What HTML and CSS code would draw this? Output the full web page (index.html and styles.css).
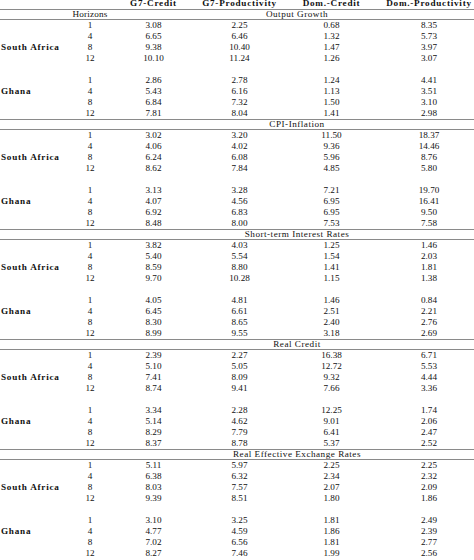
FILE: index.html
```html
<!DOCTYPE html>
<html>
<head>
<meta charset="utf-8">
<link rel="stylesheet" href="styles.css">
</head>
<body>
<div class="table">
  <div class="row head"><span></span><span></span><span>G7-Credit</span><span>G7-Productivity</span><span>Dom.-Credit</span><span>Dom.-Productivity</span></div>

  <div class="row title"><span></span><span class="lbl">Horizons</span><span class="span">Output Growth</span></div>
  <div class="row"><span></span><span>1</span><span>3.08</span><span>2.25</span><span>0.68</span><span>8.35</span></div>
  <div class="row"><span></span><span>4</span><span>6.65</span><span>6.46</span><span>1.32</span><span>5.73</span></div>
  <div class="row"><span class="country">South Africa</span><span>8</span><span>9.38</span><span>10.40</span><span>1.47</span><span>3.97</span></div>
  <div class="row"><span></span><span>12</span><span>10.10</span><span>11.24</span><span>1.26</span><span>3.07</span></div>
  <div class="row blank"></div>
  <div class="row"><span></span><span>1</span><span>2.86</span><span>2.78</span><span>1.24</span><span>4.41</span></div>
  <div class="row"><span class="country">Ghana</span><span>4</span><span>5.43</span><span>6.16</span><span>1.13</span><span>3.51</span></div>
  <div class="row"><span></span><span>8</span><span>6.84</span><span>7.32</span><span>1.50</span><span>3.10</span></div>
  <div class="row"><span></span><span>12</span><span>7.81</span><span>8.04</span><span>1.41</span><span>2.98</span></div>

  <div class="row title"><span></span><span></span><span class="span">CPI-Inflation</span></div>
  <div class="row"><span></span><span>1</span><span>3.02</span><span>3.20</span><span>11.50</span><span>18.37</span></div>
  <div class="row"><span></span><span>4</span><span>4.06</span><span>4.02</span><span>9.36</span><span>14.46</span></div>
  <div class="row"><span class="country">South Africa</span><span>8</span><span>6.24</span><span>6.08</span><span>5.96</span><span>8.76</span></div>
  <div class="row"><span></span><span>12</span><span>8.62</span><span>7.84</span><span>4.85</span><span>5.80</span></div>
  <div class="row blank"></div>
  <div class="row"><span></span><span>1</span><span>3.13</span><span>3.28</span><span>7.21</span><span>19.70</span></div>
  <div class="row"><span class="country">Ghana</span><span>4</span><span>4.07</span><span>4.56</span><span>6.95</span><span>16.41</span></div>
  <div class="row"><span></span><span>8</span><span>6.92</span><span>6.83</span><span>6.95</span><span>9.50</span></div>
  <div class="row"><span></span><span>12</span><span>8.48</span><span>8.00</span><span>7.53</span><span>7.58</span></div>

  <div class="row title"><span></span><span></span><span class="span">Short-term Interest Rates</span></div>
  <div class="row"><span></span><span>1</span><span>3.82</span><span>4.03</span><span>1.25</span><span>1.46</span></div>
  <div class="row"><span></span><span>4</span><span>5.40</span><span>5.54</span><span>1.54</span><span>2.03</span></div>
  <div class="row"><span class="country">South Africa</span><span>8</span><span>8.59</span><span>8.80</span><span>1.41</span><span>1.81</span></div>
  <div class="row"><span></span><span>12</span><span>9.70</span><span>10.28</span><span>1.15</span><span>1.38</span></div>
  <div class="row blank"></div>
  <div class="row"><span></span><span>1</span><span>4.05</span><span>4.81</span><span>1.46</span><span>0.84</span></div>
  <div class="row"><span class="country">Ghana</span><span>4</span><span>6.45</span><span>6.61</span><span>2.51</span><span>2.21</span></div>
  <div class="row"><span></span><span>8</span><span>8.30</span><span>8.65</span><span>2.40</span><span>2.76</span></div>
  <div class="row"><span></span><span>12</span><span>8.99</span><span>9.55</span><span>3.18</span><span>2.69</span></div>

  <div class="row title"><span></span><span></span><span class="span">Real Credit</span></div>
  <div class="row"><span></span><span>1</span><span>2.39</span><span>2.27</span><span>16.38</span><span>6.71</span></div>
  <div class="row"><span></span><span>4</span><span>5.10</span><span>5.05</span><span>12.72</span><span>5.53</span></div>
  <div class="row"><span class="country">South Africa</span><span>8</span><span>7.41</span><span>8.09</span><span>9.32</span><span>4.44</span></div>
  <div class="row"><span></span><span>12</span><span>8.74</span><span>9.41</span><span>7.66</span><span>3.36</span></div>
  <div class="row blank"></div>
  <div class="row"><span></span><span>1</span><span>3.34</span><span>2.28</span><span>12.25</span><span>1.74</span></div>
  <div class="row"><span class="country">Ghana</span><span>4</span><span>5.14</span><span>4.62</span><span>9.01</span><span>2.06</span></div>
  <div class="row"><span></span><span>8</span><span>8.29</span><span>7.79</span><span>6.41</span><span>2.47</span></div>
  <div class="row"><span></span><span>12</span><span>8.37</span><span>8.78</span><span>5.37</span><span>2.52</span></div>

  <div class="row title"><span></span><span></span><span class="span">Real Effective Exchange Rates</span></div>
  <div class="row"><span></span><span>1</span><span>5.11</span><span>5.97</span><span>2.25</span><span>2.25</span></div>
  <div class="row"><span></span><span>4</span><span>6.38</span><span>6.32</span><span>2.34</span><span>2.32</span></div>
  <div class="row"><span class="country">South Africa</span><span>8</span><span>8.03</span><span>7.57</span><span>2.07</span><span>2.09</span></div>
  <div class="row"><span></span><span>12</span><span>9.39</span><span>8.51</span><span>1.80</span><span>1.86</span></div>
  <div class="row blank"></div>
  <div class="row"><span></span><span>1</span><span>3.10</span><span>3.25</span><span>1.81</span><span>2.49</span></div>
  <div class="row"><span class="country">Ghana</span><span>4</span><span>4.77</span><span>4.59</span><span>1.86</span><span>2.39</span></div>
  <div class="row"><span></span><span>8</span><span>7.02</span><span>6.56</span><span>1.81</span><span>2.77</span></div>
  <div class="row"><span></span><span>12</span><span>8.27</span><span>7.46</span><span>1.99</span><span>2.56</span></div>
</div>
</body>
</html>
```

FILE: styles.css
```css
html, body {
  margin: 0;
  padding: 0;
  background: #ffffff;
}

body {
  overflow: hidden;
  font-family: "Liberation Serif", "Times New Roman", serif;
  font-size: 9.17px;
  color: #111111;
}

.table {
  width: 485px;
  margin-top: -2px;
}

.row {
  display: grid;
  grid-template-columns: 62px 56px 71px 101px 83px 112px;
  height: 11px;
  line-height: 11px;
}

.row > span {
  text-align: center;
  white-space: nowrap;
}

.row > .country {
  text-align: left;
  padding-left: 1px;
  font-weight: bold;
  letter-spacing: 0.75px;
}

.head > span {
  font-weight: bold;
  letter-spacing: 0.75px;
}

.title {
  box-sizing: border-box;
  border-top: 1px solid #8a8a8a;
  border-bottom: 1px solid #8a8a8a;
  line-height: 9px;
}

.title .lbl {
  letter-spacing: 0.2px;
}

.title .span {
  grid-column: 3 / 7;
  padding-right: 9px;
  letter-spacing: 0.5px;
}
```
